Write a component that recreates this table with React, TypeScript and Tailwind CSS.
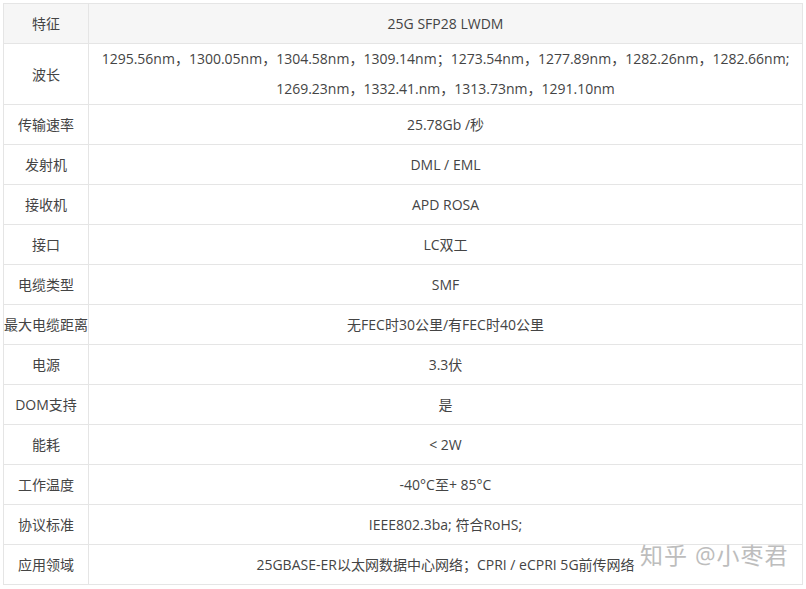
import React from "react";

const rows: [string, string][] = [
  ["传输速率", "25.78Gb /秒"],
  ["发射机", "DML / EML"],
  ["接收机", "APD ROSA"],
  ["接口", "LC双工"],
  ["电缆类型", "SMF"],
  ["最大电缆距离", "无FEC时30公里/有FEC时40公里"],
  ["电源", "3.3伏"],
  ["DOM支持", "是"],
  ["能耗", "< 2W"],
  ["工作温度", "-40°C至+ 85°C"],
  ["协议标准", "IEEE802.3ba; 符合RoHS;"],
  ["应用领域", "25GBASE-ER以太网数据中心网络；CPRI / eCPRI 5G前传网络"],
];

export default function App() {
  return (
    <div
      className="relative h-[589px] w-[806px] overflow-hidden bg-white pl-[3px] pt-[3px] text-[14px] text-[#444]"
      style={{ fontFamily: '"Open Sans", "Noto Sans CJK SC", sans-serif' }}
    >
      <table className="w-[800px] table-fixed border-collapse">
        <colgroup>
          <col className="w-[85px]" />
          <col />
        </colgroup>
        <tbody>
          <tr className="h-[40px] bg-[#f6f6f6]">
            <td className="border border-[#e5e5e5] text-center">特征</td>
            <td className="border border-[#e5e5e5] text-center">25G SFP28 LWDM</td>
          </tr>
          <tr className="h-[61px]">
            <td className="border border-[#e5e5e5] text-center">波长</td>
            <td className="border border-[#e5e5e5] px-1 text-center leading-[30px]">
              1295.56nm，1300.05nm，1304.58nm，1309.14nm；1273.54nm，1277.89nm，1282.26nm，1282.66nm;
              <br />
              1269.23nm，1332.41.nm，1313.73nm，1291.10nm
            </td>
          </tr>
          {rows.map(([k, v]) => (
            <tr key={k} className="h-[40px]">
              <td className="whitespace-nowrap border border-[#e5e5e5] text-center">{k}</td>
              <td className="border border-[#e5e5e5] text-center">{v}</td>
            </tr>
          ))}
        </tbody>
      </table>

      {/* watermark */}
      <div className="pointer-events-none absolute left-[640px] top-[538px] text-[23px] tracking-[1px] text-[#bdbdbd]">
        知乎 @小枣君
      </div>
    </div>
  );
}
